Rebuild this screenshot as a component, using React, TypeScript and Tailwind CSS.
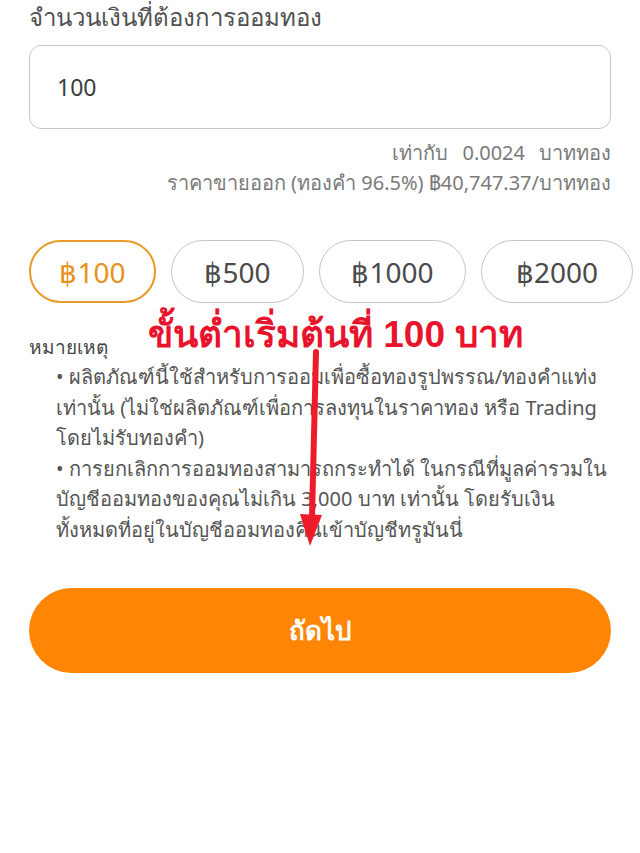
import React from 'react';

const chips = [
  { label: '฿100', w: 'w-[127px]' },
  { label: '฿500', w: 'w-[133px]' },
  { label: '฿1000', w: 'w-[147px]' },
  { label: '฿2000', w: 'w-[152px]' },
];

const notes = [
  [
    '• ผลิตภัณฑ์นี้ใช้สำหรับการออมเพื่อซื้อทองรูปพรรณ/ทองคำแท่ง',
    'เท่านั้น (ไม่ใช่ผลิตภัณฑ์เพื่อการลงทุนในราคาทอง หรือ Trading',
    'โดยไม่รับทองคำ)',
  ],
  [
    '• การยกเลิกการออมทองสามารถกระทำได้ ในกรณีที่มูลค่ารวมใน',
    'บัญชีออมทองของคุณไม่เกิน 3,000 บาท เท่านั้น โดยรับเงิน',
    'ทั้งหมดที่อยู่ในบัญชีออมทองคืนเข้าบัญชีทรูมันนี่',
  ],
];

export default function App() {
  return (
    <div
      className="relative w-[640px] h-[853px] overflow-hidden bg-white"
      style={{ fontFamily: '"Noto Sans", "Liberation Sans", sans-serif' }}
    >
      <div className="px-[29px] pt-[1px]">
        <div className="text-[24px] leading-[32px] text-[#505050]">จำนวนเงินที่ต้องการออมทอง</div>

        <div className="mt-[12px] h-[84px] rounded-[12px] border border-[#c8c8c8] flex items-center px-[27px]">
          <span className="text-[23px] text-[#3c3c3c]">100</span>
        </div>

        <div className="mt-[9px] flex flex-col items-end text-[20px] leading-[30px] text-[#7a7a7a]">
          <div className="flex gap-[14px]">
            <span>เท่ากับ</span>
            <span>0.0024</span>
            <span>บาททอง</span>
          </div>
          <div>ราคาขายออก (ทองคำ 96.5%) ฿40,747.37/บาททอง</div>
        </div>

        <div className="mt-[42px] flex gap-[15px] w-[620px]">
          {chips.map((c, i) => (
            <div
              key={c.label}
              className={
                i === 0
                  ? `${c.w} h-[63px] shrink-0 rounded-full border-2 border-[#e89a2a] text-[#e8901c] flex items-center justify-center text-[28px]`
                  : `${c.w} h-[63px] shrink-0 rounded-full border border-[#c4c4c4] text-[#4a4a4a] flex items-center justify-center text-[28px]`
              }
            >
              {c.label}
            </div>
          ))}
        </div>

        <div className="mt-[29px] text-[19px] leading-[30px] text-[#454545]">หมายเหตุ</div>
        <div className="pl-[27px] text-[20px] leading-[30.5px] text-[#555]">
          {notes.map((lines, i) => (
            <div key={i}>
              {lines.map((l) => (
                <div key={l} className="whitespace-nowrap">
                  {l}
                </div>
              ))}
            </div>
          ))}
        </div>

        <button className="mt-[43px] w-full h-[85px] rounded-full bg-[#ff8604] text-white text-[26px] font-bold flex items-center justify-center">
          ถัดไป
        </button>
      </div>

      {/* red annotation */}
      <div
        className="absolute left-[148px] top-[316px] text-[37px] font-bold text-[#e8142e] leading-none whitespace-nowrap"
        style={{ fontFamily: '"Liberation Sans", sans-serif' }}
      >
        ขั้นต่ำเริ่มต้นที่ 100 บาท
      </div>
      <svg className="absolute left-0 top-0" width="640" height="853">
        <path d="M316 352 L312 518" stroke="#ee1c2a" strokeWidth="6" strokeLinecap="round" />
        <path d="M300 514 L310 546 L322 515 Z" fill="#ee1c2a" />
      </svg>
    </div>
  );
}
